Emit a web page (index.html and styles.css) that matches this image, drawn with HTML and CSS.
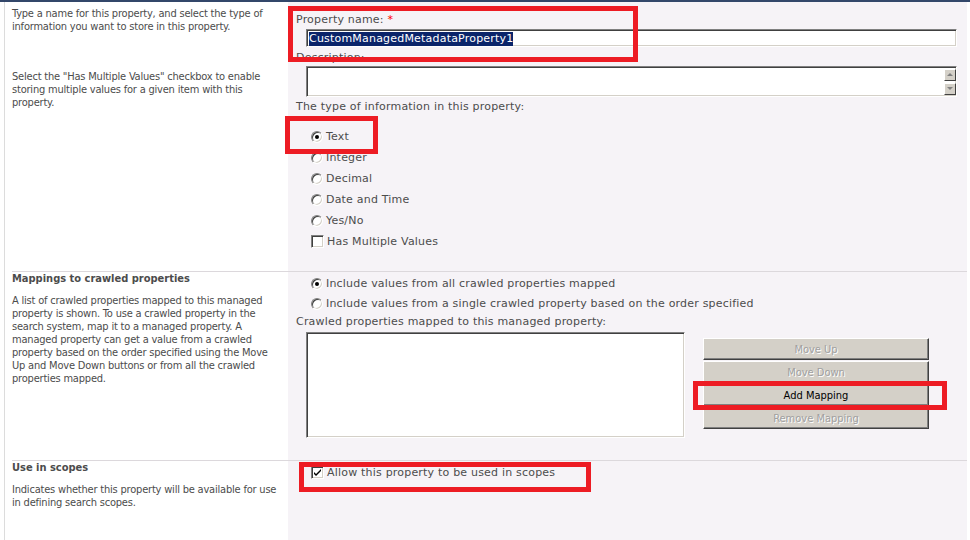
FILE: index.html
```html
<!DOCTYPE html>
<html lang="en">
<head>
  <meta charset="UTF-8">
  <meta name="viewport" content="width=device-width, initial-scale=1.0">
  <title>Edit Managed Property</title>
  <link rel="stylesheet" href="styles.css">
</head>
<body>
  <div id="topbar"></div>
  <div id="page">
    <div class="section first">
      <div class="desc">
        <p>Type a name for this property, and select the type of information you want to store in this property.</p>
        <p class="spaced">Select the "Has Multiple Values" checkbox to enable storing multiple values for a given item with this property.</p>
      </div>
      <div class="controls">
        <div class="label">Property name: <span class="required">*</span></div>
        <div class="textbox"><span class="selected">CustomManagedMetadataProperty1</span></div>
        <div class="label desc-label">Description:</div>
        <div class="textarea">
          <div class="scrollbar">
            <span class="scroll-btn up"></span>
            <span class="scroll-btn down"></span>
          </div>
        </div>
        <div class="label type-label">The type of information in this property:</div>
        <div class="options">
          <div class="option"><span class="radio checked"></span>Text</div>
          <div class="option"><span class="radio"></span>Integer</div>
          <div class="option"><span class="radio"></span>Decimal</div>
          <div class="option"><span class="radio"></span>Date and Time</div>
          <div class="option"><span class="radio"></span>Yes/No</div>
          <div class="option"><span class="checkbox"></span>Has Multiple Values</div>
        </div>
      </div>
    </div>

    <div class="sectionline"></div>

    <div class="section mappings">
      <div class="desc">
        <h3>Mappings to crawled properties</h3>
        <p>A list of crawled properties mapped to this managed property is shown. To use a crawled property in the search system, map it to a managed property. A managed property can get a value from a crawled property based on the order specified using the Move Up and Move Down buttons or from all the crawled properties mapped.</p>
      </div>
      <div class="controls">
        <div class="option short"><span class="radio checked"></span>Include values from all crawled properties mapped</div>
        <div class="option short"><span class="radio"></span>Include values from a single crawled property based on the order specified</div>
        <div class="label list-label">Crawled properties mapped to this managed property:</div>
        <div class="mapping">
          <div class="listbox"></div>
          <div class="buttons">
            <button class="button disabled">Move Up</button>
            <button class="button disabled">Move Down</button>
            <button class="button">Add Mapping</button>
            <button class="button disabled">Remove Mapping</button>
          </div>
        </div>
      </div>
    </div>

    <div class="sectionline"></div>

    <div class="section last">
      <div class="desc">
        <h3>Use in scopes</h3>
        <p>Indicates whether this property will be available for use in defining search scopes.</p>
      </div>
      <div class="controls">
        <div class="option">
          <span class="checkbox checked">
            <svg width="9" height="9" viewBox="0 0 9 9"><path d="M1 4 L3 6 L8 1 L8 3 L3 8 L1 6 Z" fill="#000"/></svg>
          </span>Allow this property to be used in scopes
        </div>
      </div>
    </div>
  </div>

  <div class="mark mark-name"></div>
  <div class="mark mark-text"></div>
  <div class="mark mark-add"></div>
  <div class="mark mark-scope"></div>
</body>
</html>
```

FILE: styles.css
```css
* {
  box-sizing: border-box;
  margin: 0;
  padding: 0;
}

body {
  position: relative;
  height: 540px;
  overflow: hidden;
  background-color: #fff;
  color: #4c4c4c;
  font-family: "DejaVu Sans Condensed", Tahoma, sans-serif;
  font-size: 11px;
}

#topbar {
  height: 2px;
  background-color: #33476a;
}

#page {
  display: flex;
  flex-direction: column;
  height: 538px;
  width: 963px;
  margin-left: 4px;
  border-left: 1px solid #dcdcdc;
}

.section {
  display: flex;
}

.section.last {
  flex: 1;
}

.sectionline {
  height: 1px;
  margin-left: 7px;
  background-color: #dcd8dc;
}

.desc {
  width: 283px;
  padding: 0 6px 0 7px;
  line-height: 13px;
  letter-spacing: -0.2px;
}

.first .desc {
  padding-top: 5px;
}

.desc .spaced {
  margin-top: 37px;
}

.desc h3 {
  font-size: 11px;
  line-height: 14px;
  margin-bottom: 8px;
  letter-spacing: 0;
}

.controls {
  flex: 1;
  background-color: #f6f3f7;
  padding: 0 10px 0 8px;
  font-family: "DejaVu Sans", Verdana, sans-serif;
  line-height: 14px;
  letter-spacing: 0.2px;
}

.first .controls {
  padding-top: 11px;
  padding-bottom: 19px;
}

.mappings .controls {
  padding-top: 2px;
  padding-bottom: 22px;
}

.last .controls {
  padding-top: 1px;
}

.required {
  color: #f00;
}

.textbox,
.textarea,
.listbox {
  background-color: #fff;
  border: 1px solid;
  border-color: #808080 #fff #fff #808080;
  box-shadow: inset 1px 1px #404040, inset -1px -1px #d4d0c8;
}

.textbox {
  height: 18px;
  margin: 2px 0 0 10px;
  padding: 2px 0 0 2px;
  line-height: 14px;
}

.selected {
  display: inline-block;
  background-color: #0a246a;
  color: #fff;
}

.desc-label {
  margin-top: 4px;
}

.textarea {
  display: flex;
  justify-content: flex-end;
  height: 31px;
  margin: 1px 0 0 10px;
}

.scrollbar {
  display: flex;
  flex-direction: column;
  width: 12px;
  padding-top: 2px;
  gap: 2px;
}

.scroll-btn {
  position: relative;
  display: block;
  height: 12px;
  background-color: #d4d0c8;
  border: 1px solid;
  border-color: #fff #404040 #404040 #fff;
}

.scroll-btn::after {
  content: "";
  position: absolute;
  left: 2px;
  top: 3px;
  border-left: 3px solid transparent;
  border-right: 3px solid transparent;
}

.scroll-btn.up::after {
  border-bottom: 3px solid #808080;
}

.scroll-btn.down::after {
  border-top: 3px solid #808080;
}

.type-label {
  margin-top: 3px;
}

.options {
  margin-top: 12px;
}

.option {
  display: flex;
  align-items: center;
  height: 21px;
  padding-left: 15px;
}

.option.short {
  height: 20px;
}

.radio,
.checkbox {
  position: relative;
  flex: none;
  display: flex;
  align-items: center;
  justify-content: center;
  width: 12px;
  height: 12px;
  margin-right: 3px;
  background-color: #fff;
  border: 1px solid;
  border-color: #808080 #fff #fff #808080;
  box-shadow: inset 1px 1px #404040, inset -1px -1px #d4d0c8;
}

.radio {
  border-radius: 50%;
}

.radio.checked::after {
  content: "";
  width: 4px;
  height: 4px;
  border-radius: 50%;
  background-color: #000;
}

.checkbox {
  width: 13px;
  height: 13px;
}

.list-label {
  margin-top: 1px;
}

.mapping {
  display: flex;
  margin-top: 3px;
}

.listbox {
  width: 379px;
  height: 106px;
  margin-left: 10px;
}

.buttons {
  display: flex;
  flex-direction: column;
  gap: 1px;
  margin-left: 18px;
  padding-top: 6px;
}

.button {
  width: 226px;
  height: 22px;
  background-color: #d4d0c8;
  border: 1px solid;
  border-color: #fff #404040 #404040 #fff;
  box-shadow: inset -1px -1px #808080;
  color: #000;
  font-family: "DejaVu Sans Condensed", Tahoma, sans-serif;
  font-size: 11px;
}

.button.disabled {
  color: #a0a0a0;
  text-shadow: 1px 1px #fff;
}

.mark {
  position: absolute;
  border: 5px solid #ed1c24;
}

.mark-name {
  left: 288px;
  top: 6px;
  width: 350px;
  height: 56px;
}

.mark-text {
  left: 285px;
  top: 116px;
  width: 93px;
  height: 38px;
}

.mark-add {
  left: 693px;
  top: 381px;
  width: 254px;
  height: 29px;
}

.mark-scope {
  left: 299px;
  top: 462px;
  width: 292px;
  height: 30px;
}
```
